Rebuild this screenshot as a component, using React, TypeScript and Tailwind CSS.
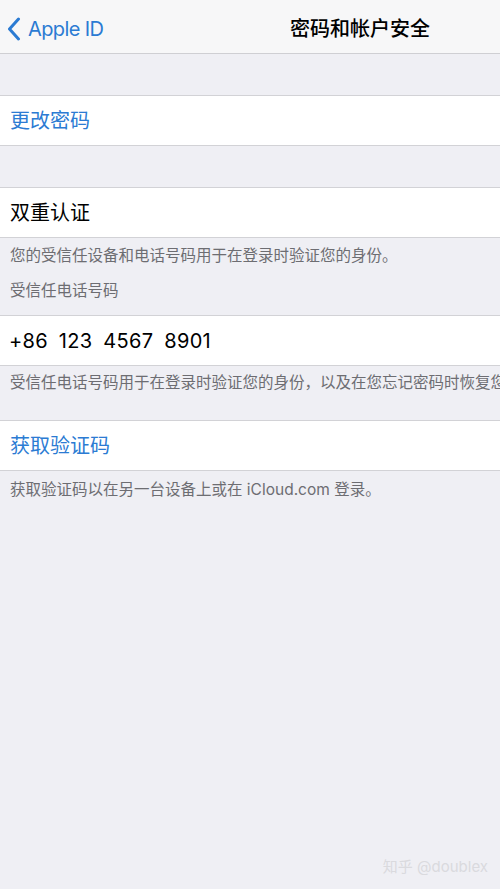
const font = { fontFamily: 'Inter, "Noto Sans CJK SC", sans-serif' };

function Row({ children, blue }: { children: React.ReactNode; blue?: boolean }) {
  return (
    <div
      className={`h-[51px] bg-white border-y border-[#d2d2d6] flex items-center pl-[10px] text-[20px] ${
        blue ? "text-[#2b7bd3]" : "text-black"
      }`}
    >
      {children}
    </div>
  );
}

function Note({ children, className = "" }: { children: React.ReactNode; className?: string }) {
  return (
    <div className={`pl-[10px] text-[15.5px] leading-[20px] text-[#6d6d72] whitespace-nowrap overflow-hidden ${className}`}>
      {children}
    </div>
  );
}

export default function App() {
  return (
    <div className="relative w-[500px] h-[889px] bg-[#efeff4] overflow-hidden" style={font}>
      {/* nav bar */}
      <div className="h-[54px] bg-[#f7f7f8] border-b border-[#cfcfd3] flex items-center pt-[5px] relative">
        <div className="flex items-center pl-[7px] text-[#2b7bd3]">
          <svg width="14" height="24" viewBox="0 0 14 24" className="mr-[7px]">
            <path d="M11.5 2 L2.5 12 L11.5 22" fill="none" stroke="currentColor" strokeWidth="3" strokeLinecap="round" strokeLinejoin="round" />
          </svg>
          <span className="text-[20px] tracking-[-0.6px]">Apple ID</span>
        </div>
        <div className="absolute left-[290px] top-[15px] text-[20px] leading-[28px] text-black font-medium">
          密码和帐户安全
        </div>
      </div>

      <div className="mt-[41px]">
        <Row blue>更改密码</Row>
      </div>

      <div className="mt-[41px]">
        <Row>双重认证</Row>
      </div>
      <Note className="pt-[8px]">您的受信任设备和电话号码用于在登录时验证您的身份。</Note>
      <Note className="pt-[15px] pb-[14px]">受信任电话号码</Note>

      <Row>
        <span className="[word-spacing:5px] tracking-[0.3px] -ml-[1px]">+86 123 4567 8901</span>
      </Row>
      <Note className="pt-[7px]">受信任电话号码用于在登录时验证您的身份，以及在您忘记密码时恢复您的帐户。</Note>

      <div className="mt-[27px]">
        <Row blue>获取验证码</Row>
      </div>
      <Note className="pt-[9px]">获取验证码以在另一台设备上或在 iCloud.com 登录。</Note>

      <div className="absolute right-[12px] bottom-[11px] text-[15px] text-[#dadade]">知乎 @doublex</div>
    </div>
  );
}
